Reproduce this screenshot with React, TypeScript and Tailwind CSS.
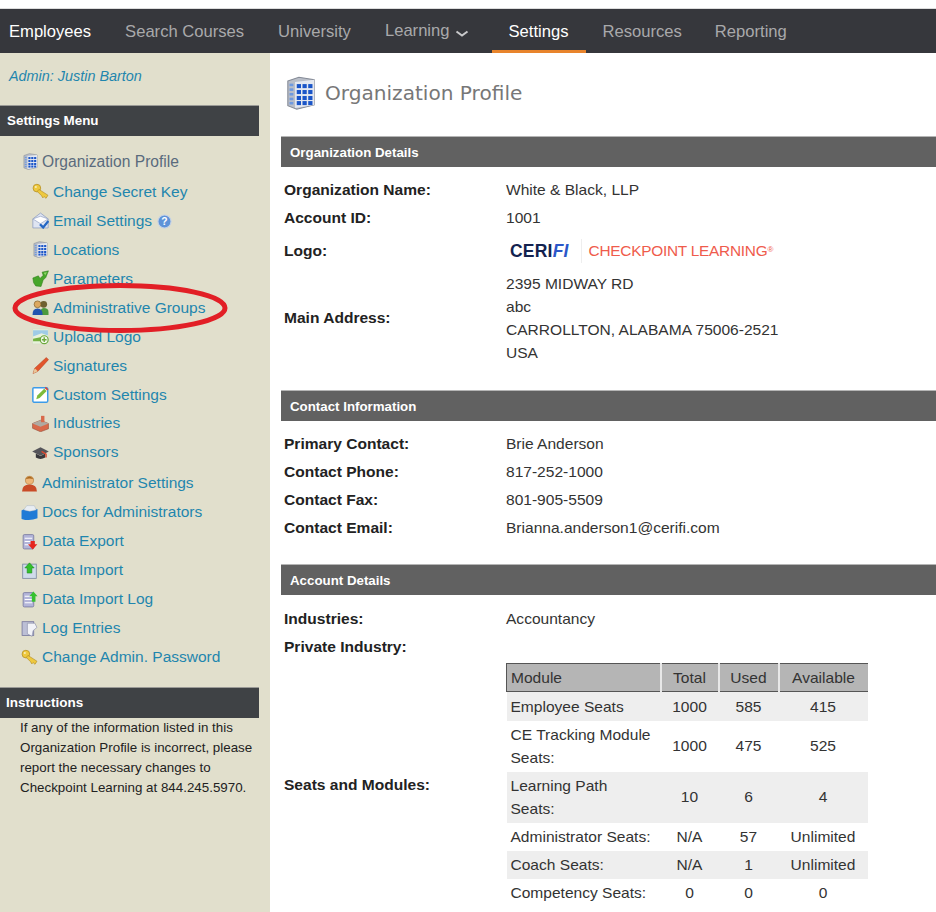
import React from "react";

type I = { children: React.ReactNode; s?: number; cls?: string };
const Svg = ({ children, s = 17, cls = "" }: I) => (
  <svg width={s} height={s} viewBox="0 0 16 16" className={"shrink-0 " + cls}>{children}</svg>
);
const Building = ({ s = 17 }: { s?: number }) => (
  <Svg s={s}>
    <path d="M1.8 2.4 L7 0.6 L14.2 1.8 L14.2 13.6 L6 15.6 L1.8 14Z" fill="#b9bec8" stroke="#858b97" strokeWidth=".5" />
    <path d="M5.2 2.8 L14.2 1.8 V13.6 L5.2 15Z" fill="#e4e8f0" />
    {[6, 8.7, 11.4].map((x) => [3.8, 6.6, 9.4, 11.8].map((y) => <rect key={x + "-" + y} x={x} y={y} width="2" height="1.9" fill="#1a55c8" />))}
    {[3.6, 5.8, 8, 10.2, 12.2].map((y) => <rect key={y} x="2.6" y={y} width="1.8" height="1.2" fill="#6f9ae0" />)}
  </Svg>
);
const Key = () => (
  <Svg>
    <circle cx="4.6" cy="4.8" r="3.6" fill="#eec93f" stroke="#b38b1c" strokeWidth=".7" />
    <circle cx="3.6" cy="3.8" r="1" fill="#f8eeb8" />
    <path d="M6.5 6 L15 11.5 L13.2 14.4 L11.4 12.8 L10.2 14 L9 12 L5 8Z" fill="#eec93f" stroke="#b38b1c" strokeWidth=".6" />
  </Svg>
);
const Mail = () => (
  <Svg>
    <path d="M.8 6.5 L8 1 L15.2 6.5 V15 H.8Z" fill="#dfe5f2" stroke="#8a9ac0" strokeWidth=".7" />
    <path d="M.8 6.5 L8 11 L15.2 6.5 L8 4Z" fill="#fff" stroke="#8a9ac0" strokeWidth=".6" />
    <path d="M7.5 11.5 L10.5 14.5 L15.4 8.5" fill="none" stroke="#2467c4" strokeWidth="2.2" />
  </Svg>
);
const Gear = () => (
  <Svg>
    <path d="M.8 7.5 L6 5.5 L7.5 8 L10.5 5 L9.5 2 L15.5 .8 L13 7 L10.5 9.5 L8.5 15.5 L3.5 15 L1.5 12Z" fill="#47a62a" stroke="#2b7a18" strokeWidth=".5" />
    <path d="M11 2.5 L14 2 L12.5 5Z" fill="#8fd76a" />
  </Svg>
);
const Group = () => (
  <Svg>
    <circle cx="11" cy="5" r="3.2" fill="#6f6030" />
    <path d="M7.5 15 Q7.5 8.5 11 8.5 Q15.5 8.5 15.5 12 V15Z" fill="#4b9a3f" />
    <circle cx="5.2" cy="5" r="3.2" fill="#dca85f" stroke="#7a5a23" strokeWidth=".6" />
    <path d="M.5 15 Q.5 9 5.2 9 Q10 9 10 15Z" fill="#2054b0" />
  </Svg>
);
const Upload = () => (
  <Svg>
    <rect x="0.3" y="1" width="15.4" height="14" fill="#e8f2dc" stroke="#d4dac6" strokeWidth=".5" />
    <path d="M1 2 H15 V7 L9 5 L1 8Z" fill="#9fcbe6" />
    <path d="M1 10 L9 8.5 V12.5 H1Z" fill="#74b242" />
    <circle cx="11.5" cy="11" r="3.7" fill="#f2f7ea" stroke="#6aa83c" strokeWidth="1.1" />
    <path d="M11.5 8.8 V13.2 M9.3 11 H13.7" stroke="#6aa83c" strokeWidth="1.3" />
  </Svg>
);
const Pen = () => (
  <Svg>
    <path d="M1 15.5 L2.6 10.5 L13.5 .5 L15.5 2.5 L5.5 13.5Z" fill="#e2552c" stroke="#b23d1b" strokeWidth=".5" />
    <path d="M1 15.5 L2.6 10.5 L5.5 13.5Z" fill="#e8c99a" />
  </Svg>
);
const Custom = () => (
  <Svg>
    <rect x=".8" y="1.6" width="14" height="13.6" rx="1" fill="#fff" stroke="#3c9be8" strokeWidth="1.4" />
    <path d="M4 12.5 L5 9 L11.5 2.5 L13.8 4.8 L7.2 11.4Z" fill="#7dbb3a" />
    <path d="M12 2 L13 .8 L15.4 3 L14.3 4.2Z" fill="#d9493a" />
  </Svg>
);
const Factory = () => (
  <Svg>
    <path d="M.5 8 L8 5 L15.5 8 V13 L8 15.8 L.5 12.5Z" fill="#d8694a" stroke="#8c4432" strokeWidth=".5" />
    <path d="M.5 8 L8 11 L15.5 8 L8 5Z" fill="#aeaaa2" />
    <rect x="8.5" y=".8" width="3.2" height="6" fill="#d8694a" />
  </Svg>
);
const Cap = () => (
  <Svg>
    <path d="M8 3 L15.8 7 L8 11 L.2 7Z" fill="#55555a" />
    <path d="M3.6 9 V12.6 Q8 15.4 12.4 12.6 V9 L8 11.2Z" fill="#38383c" />
    <path d="M9 7 L13.2 9.5 V12.6" stroke="#d9482e" strokeWidth="1.4" fill="none" />
  </Svg>
);
const Person = () => (
  <Svg>
    <circle cx="8" cy="5" r="3.8" fill="#eeb678" stroke="#a8681f" strokeWidth=".5" />
    <path d="M4.2 4 Q8 -1 11.8 4 Q8 2.5 4.2 4Z" fill="#a8691f" />
    <path d="M1 15.5 Q1 9 8 9 Q15 9 15 15.5Z" fill="#c94b27" />
  </Svg>
);
const Docs = () => (
  <Svg>
    <path d="M.5 6 Q8 1.5 15.5 5 V13.5 Q8 16.5 .5 14Z" fill="#1f7ad6" />
    <path d="M2.5 5.5 L5.5 1.5 H12.5 L14.5 5.5 Q8 8 2.5 5.5Z" fill="#e8edf3" stroke="#a3acb8" strokeWidth=".4" />
  </Svg>
);
const Db = ({ children }: { children?: React.ReactNode }) => (
  <Svg>
    <rect x="2" y="1.5" width="10" height="13.5" rx="1.2" fill="#b3b5d9" stroke="#6f7099" strokeWidth=".7" />
    <path d="M3.5 5 H10.5 M3.5 8 H10.5 M3.5 11 H10.5" stroke="#fff" strokeWidth="1" />
    {children}
  </Svg>
);
const Export = () => <Db><path d="M9 7.5 H13 V10.5 H15.4 L11 15.5 L6.6 10.5 H9Z" fill="#e5261f" /></Db>;
const Import = () => (
  <Svg>
    <rect x="1.6" y="2" width="12.8" height="13.4" fill="#cfdbea" stroke="#7d8ba3" strokeWidth=".8" />
    <path d="M8 .8 L12.4 5.6 H10.2 V10.4 H5.8 V5.6 H3.6Z" fill="#34c02c" stroke="#1b8518" strokeWidth=".5" />
  </Svg>
);
const ImportLog = () => <Db><path d="M11.6 .5 L15.6 5 H13.6 V10 H10.2 V5 H7.8Z" fill="#37c12f" /></Db>;
const LogE = () => (
  <Svg>
    <rect x="1" y="1.6" width="11" height="13" fill="#bcbfd6" stroke="#6f7099" strokeWidth=".7" />
    <path d="M6 3 H13 L15 7 L11.4 10 L10.4 15.4 L6 13Z" fill="#f2f3f8" stroke="#8b8da8" strokeWidth=".6" />
  </Svg>
);
const Help = () => (
  <svg width="15" height="15" viewBox="0 0 16 16" className="shrink-0 ml-[1px] mt-[2px]">
    <circle cx="8" cy="8" r="7" fill="#5f93d8" stroke="#c6d3e6" strokeWidth="1.2" />
    <text x="8" y="12" textAnchor="middle" fontSize="11" fontWeight="700" fontFamily="Liberation Sans, sans-serif" fill="#fff">?</text>
  </svg>
);

const subItems: [string, React.ReactNode, number][] = [
  ["Change Secret Key", <Key />, 29],
  ["Email Settings", <Mail />, 29],
  ["Locations", <Building />, 29],
  ["Parameters", <Gear />, 29],
  ["Administrative Groups", <Group />, 29],
  ["Upload Logo", <Upload />, 29],
  ["Signatures", <Pen />, 29],
  ["Custom Settings", <Custom />, 28.5],
  ["Industries", <Factory />, 29],
  ["Sponsors", <Cap />, 29],
];
const topItems: [string, React.ReactNode][] = [
  ["Administrator Settings", <Person />],
  ["Docs for Administrators", <Docs />],
  ["Data Export", <Export />],
  ["Data Import", <Import />],
  ["Data Import Log", <ImportLog />],
  ["Log Entries", <LogE />],
  ["Change Admin. Password", <Key />],
];

const navItems: [string, string][] = [
  ["Employees", "text-white ml-[9px]"],
  ["Search Courses", "text-[#a9a9ab] ml-[34px]"],
  ["University", "text-[#a9a9ab] ml-[34px]"],
];

const Section = ({ title }: { title: string }) => (
  <div className="h-[31px] bg-[#616161] border-t border-[#b5b5b5] pl-[9px] pt-[1px] flex items-center text-[13.3px] font-bold text-white">{title}</div>
);
const Row = ({ label, h = 28, children }: { label: string; h?: number; children: React.ReactNode }) => (
  <div className="flex items-center" style={{ height: h }}>
    <div className="w-[225px] shrink-0 pl-[3px] font-bold text-[#222]">{label}</div>
    <div className="text-[#333] min-w-0">{children}</div>
  </div>
);

const tableRows: [React.ReactNode, string, string, string, number, string][] = [
  ["Employee Seats", "1000", "585", "415", 29, "bg-[#eeeeee]"],
  [<>CE Tracking Module<br />Seats:</>, "1000", "475", "525", 51, ""],
  [<>Learning Path<br />Seats:</>, "10", "6", "4", 51, "bg-[#eeeeee]"],
  ["Administrator Seats:", "N/A", "57", "Unlimited", 28, ""],
  ["Coach Seats:", "N/A", "1", "Unlimited", 28, "bg-[#eeeeee]"],
  ["Competency Seats:", "0", "0", "0", 28, ""],
];

export default function App() {
  return (
    <div className="w-[936px] h-[912px] overflow-hidden bg-white font-['Liberation_Sans',Arial,sans-serif] text-[15.55px] relative">
      <div className="h-[9px] bg-white border-b border-[#ddd]" />
      <nav className="h-[44px] bg-[#36373c] flex items-stretch text-[16.6px] whitespace-nowrap">
        {navItems.map(([t, c]) => (
          <div key={t} className={"flex items-center pt-[3px] " + c}>{t}</div>
        ))}
        <div className="flex items-center pt-[1px] ml-[34px] text-[#a9a9ab]">
          Learning
          <svg width="14" height="8" viewBox="0 0 14 8" className="ml-[5px] mt-[5px]"><path d="M1.5 1.5 L7 5.5 L12.5 1.5" fill="none" stroke="#c9c9cb" strokeWidth="2" /></svg>
        </div>
        <div className="ml-[23px] w-[94px] border-b-[3px] border-[#e8842c] flex items-center justify-center text-white pt-[6px]">Settings</div>
        <div className="flex items-center pt-[3px] ml-[17px] text-[#a9a9ab]">Resources</div>
        <div className="flex items-center pt-[3px] ml-[33px] text-[#a9a9ab]">Reporting</div>
      </nav>
      <div className="flex h-[859px]">
        <aside className="w-[270px] shrink-0 bg-[#e1dfcc]">
          <div className="h-[52px] pt-[13px] pl-[9px] text-[14.4px] italic text-[#1f86ae]">Admin: Justin Barton</div>
          <div className="w-[259px] h-[31px] bg-[#3f4245] border-t border-[#9a9a96] pl-[7px] pt-[1px] flex items-center text-[13.4px] font-bold text-white">Settings Menu</div>
          <div className="h-[11px]" />
          <div className="h-[29px] pl-[22px] flex items-center gap-[3px] text-[15.6px] text-[#5a6b7d]">
            <Building />Organization Profile
          </div>
          <div className="h-[1px]" />
          <ul className="text-[15.5px] text-[#1f86ae]">
            {subItems.map(([t, ic, h]) => (
              <li key={t} className="pl-[32px] flex items-center gap-[4px]" style={{ height: h }}>
                {ic}
                <span>{t}</span>
                {t === "Email Settings" && <Help />}
              </li>
            ))}
          </ul>
          <div className="h-[2px]" />
          <ul className="text-[15.5px] text-[#1f86ae]">
            {topItems.map(([t, ic]) => (
              <li key={t} className="h-[29px] pl-[21px] flex items-center gap-[4px]">
                {ic}
                <span>{t}</span>
              </li>
            ))}
          </ul>
          <div className="h-[15px]" />
          <div className="w-[259px] h-[31px] bg-[#3f4245] border-t border-[#9a9a96] pl-[6px] pt-[1px] flex items-center text-[13.5px] font-bold text-white">Instructions</div>
          <p className="pl-[20px] pr-[15px] text-[13.35px] leading-[20px] text-[#222]">
            If any of the information listed in this Organization Profile is incorrect, please report the necessary changes to Checkpoint Learning at 844.245.5970.
          </p>
        </aside>
        <main className="flex-1 min-w-0 pl-[11px]">
          <div className="h-[83px] flex items-center gap-[7px] pl-[3px] pb-[3px] text-[#777] font-['DejaVu_Sans',sans-serif]">
            <Building s={34} />
            <span className="text-[20.1px]">Organization Profile</span>
          </div>
          <Section title="Organization Details" />
          <div className="h-[9px]" />
          <Row label="Organization Name:">White &amp; Black, LLP</Row>
          <Row label="Account ID:">1001</Row>
          <Row label="Logo:" h={38}>
            <div className="flex items-center h-[24px] ml-[4px]">
              <span className="font-bold text-[17.5px] tracking-[0.2px] text-[#13224f]">CERI<span className="italic text-[#2b57c9]">FI</span></span>
              <span className="w-px h-[24px] bg-[#eee] mx-[7px] ml-[12px]" />
              <span className="text-[15.4px] text-[#ef5b4c] tracking-[-0.25px]">CHECKPOINT LEARNING<sup className="text-[8px]">®</sup></span>
            </div>
          </Row>
          <Row label="Main Address:" h={96}>
            <div className="leading-[23px]">2395 MIDWAY RD<br />abc<br />CARROLLTON, ALABAMA 75006-2521<br />USA</div>
          </Row>
          <div className="h-[24px]" />
          <Section title="Contact Information" />
          <div className="h-[9px]" />
          <Row label="Primary Contact:">Brie Anderson</Row>
          <Row label="Contact Phone:">817-252-1000</Row>
          <Row label="Contact Fax:">801-905-5509</Row>
          <Row label="Contact Email:">Brianna.anderson1@cerifi.com</Row>
          <div className="h-[22px]" />
          <Section title="Account Details" />
          <div className="h-[10px]" />
          <Row label="Industries:">Accountancy</Row>
          <Row label="Private Industry:"><span /></Row>
          <div className="flex items-center h-[245px] mt-[1px]">
            <div className="w-[225px] shrink-0 pl-[3px] font-bold text-[#222]">Seats and Modules:</div>
            <table className="w-[361px] table-fixed border-collapse text-[#333] self-start mt-[1px]">
              <colgroup>
                <col className="w-[154px]" /><col className="w-[58px]" /><col className="w-[60px]" /><col className="w-[89px]" />
              </colgroup>
              <thead>
                <tr className="h-[28px] bg-[#b5b5b5] border-y-[1.5px] border-[#555] font-normal">
                  <th className="font-normal text-left pl-[4px] border-l-[1.5px] border-[#555]">Module</th>
                  <th className="font-normal border-l-2 border-[#e8e8e8]">Total</th>
                  <th className="font-normal border-l-2 border-[#e8e8e8]">Used</th>
                  <th className="font-normal border-l-2 border-[#e8e8e8]">Available</th>
                </tr>
              </thead>
              <tbody>
                {tableRows.map(([m, a, b, c, h, bg], i) => (
                  <tr key={i} className={bg} style={{ height: h }}>
                    <td className="pl-[4px] leading-[23px]">{m}</td>
                    <td className="text-center">{a}</td>
                    <td className="text-center">{b}</td>
                    <td className="text-center">{c}</td>
                  </tr>
                ))}
              </tbody>
            </table>
          </div>
        </main>
      </div>
      <svg width="220" height="54" viewBox="0 0 220 54" className="absolute left-[12px] top-[281px] pointer-events-none">
        <ellipse cx="108" cy="27" rx="105" ry="22.5" fill="none" stroke="#e21f26" strokeWidth="5" />
      </svg>
    </div>
  );
}
